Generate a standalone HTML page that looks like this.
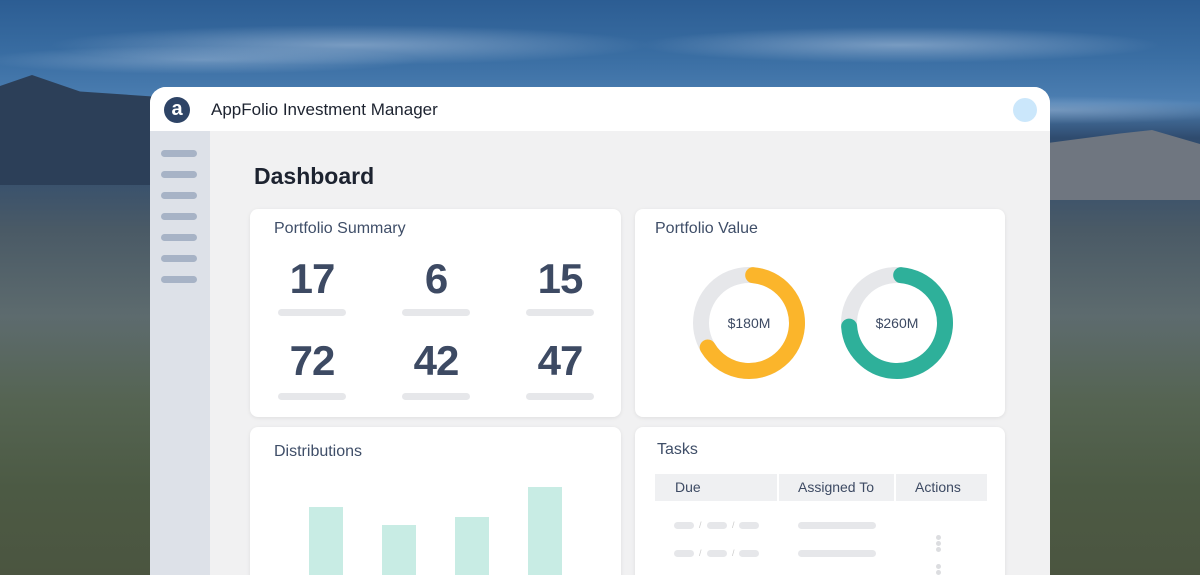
<!DOCTYPE html>
<html><head><meta charset="utf-8"><style>
*{margin:0;padding:0;box-sizing:border-box}
html,body{width:1200px;height:575px;overflow:hidden}
body{position:relative;font-family:"Liberation Sans",sans-serif;
background:linear-gradient(180deg,#2c5d93 0%,#3a6ea3 10%,#4d7fb2 18%,#2f4b6e 24%,#36506e 30%,#4a5a66 40%,#5d6b6e 55%,#556452 70%,#4c5a44 85%,#4b5540 100%);}
.sky{position:absolute;left:0;top:0;width:1200px;height:140px;background:
radial-gradient(ellipse 300px 20px at 350px 45px,rgba(200,215,235,.45),transparent),
radial-gradient(ellipse 260px 18px at 900px 45px,rgba(200,215,235,.45),transparent),
radial-gradient(ellipse 200px 14px at 1050px 110px,rgba(200,215,235,.35),transparent),
radial-gradient(ellipse 220px 14px at 200px 60px,rgba(200,215,235,.35),transparent);}
.mtnL{position:absolute;left:0;top:75px;width:160px;height:110px;background:#2c3f58;clip-path:polygon(0 10%,20% 0,50% 15%,100% 20%,100% 100%,0 100%)}
.mtnR{position:absolute;left:1040px;top:130px;width:160px;height:70px;background:#6f7680;clip-path:polygon(0 20%,50% 5%,70% 0,100% 20%,100% 100%,0 100%)}
.win{position:absolute;left:150px;top:87px;width:900px;height:488px;background:#f1f1f2;border-radius:16px 16px 0 0;overflow:hidden}
.hdr{height:44px;background:#fff;position:relative}
.logo{position:absolute;left:14px;top:10px;width:26px;height:26px;border-radius:50%;background:#2e4466;color:#fff;font-size:20px;font-weight:bold;text-align:center;line-height:24px}
.title{position:absolute;left:61px;top:13px;font-size:17px;color:#1d2330}
.av{position:absolute;left:863px;top:11px;width:24px;height:24px;border-radius:50%;background:#cbe7fb}
.side{position:absolute;left:0;top:44px;width:60px;height:444px;background:#dde1e8}
.side i{position:absolute;left:11px;width:36px;height:7px;border-radius:4px;background:#a7b3c6}
h1{position:absolute;left:104px;top:76px;font-size:23px;color:#1d2330;font-weight:600}
.card{position:absolute;background:#fff;border-radius:8px;box-shadow:0 1px 4px rgba(0,0,0,.08);overflow:hidden}
.ct{position:absolute;left:24px;top:11px;font-size:16px;color:#3f4e68}
.num{position:absolute;width:80px;text-align:center;font-size:42px;color:#3d4a63;font-weight:bold;letter-spacing:-1px}
.bar{position:absolute;width:68px;height:7px;border-radius:4px;background:#e6e7ea}
.cb{position:absolute;background:#c8ece4;width:34px;bottom:0}
.th{position:absolute;top:47px;height:27px;background:#eff0f2;font-size:14px;color:#3d4a63;line-height:27px}
.pl{position:absolute;height:7px;border-radius:4px;background:#e6e7ea}
.sl{position:absolute;font-size:9px;color:#ccc}
.dot{position:absolute;width:5px;height:5px;border-radius:50%;background:#dcdde0}
</style></head><body>
<div class="sky"></div><div class="mtnL"></div><div class="mtnR"></div>
<div class="win">
<div class="hdr"><div class="logo">a</div><div class="title">AppFolio Investment Manager</div><div class="av"></div></div>
<div class="side"><i style="top:19px"></i><i style="top:40px"></i><i style="top:61px"></i><i style="top:82px"></i><i style="top:103px"></i><i style="top:124px"></i><i style="top:145px"></i></div>
<h1>Dashboard</h1>
<div class="card" style="left:100px;top:122px;width:371px;height:208px">
<div class="ct">Portfolio Summary</div>
<div class="num" style="left:22px;top:46px">17</div><div class="num" style="left:146px;top:46px">6</div><div class="num" style="left:270px;top:46px">15</div>
<div class="bar" style="left:28px;top:100px"></div><div class="bar" style="left:152px;top:100px"></div><div class="bar" style="left:276px;top:100px"></div>
<div class="num" style="left:22px;top:128px">72</div><div class="num" style="left:146px;top:128px">42</div><div class="num" style="left:270px;top:128px">47</div>
<div class="bar" style="left:28px;top:184px"></div><div class="bar" style="left:152px;top:184px"></div><div class="bar" style="left:276px;top:184px"></div>
</div>
<div class="card" style="left:485px;top:122px;width:370px;height:208px">
<div class="ct" style="left:20px">Portfolio Value</div>
<svg style="position:absolute;left:0;top:0" width="370" height="208">
<g transform="translate(114,114)"><circle r="48" fill="none" stroke="#e6e7ea" stroke-width="16"/>
<circle r="48" fill="none" stroke="#fbb52b" stroke-width="16" stroke-linecap="round" stroke-dasharray="196 400" transform="rotate(-85)"/>
<text y="5" text-anchor="middle" font-size="14" fill="#3d4a63" font-family="Liberation Sans">$180M</text></g>
<g transform="translate(262,114)"><circle r="48" fill="none" stroke="#e6e7ea" stroke-width="16"/>
<circle r="48" fill="none" stroke="#2eb09a" stroke-width="16" stroke-linecap="round" stroke-dasharray="218 400" transform="rotate(-85)"/>
<text y="5" text-anchor="middle" font-size="14" fill="#3d4a63" font-family="Liberation Sans">$260M</text></g>
</svg>
</div>
<div class="card" style="left:100px;top:340px;width:371px;height:160px">
<div class="ct" style="top:16px">Distributions</div>
<div class="cb" style="left:59px;top:80px"></div>
<div class="cb" style="left:132px;top:98px"></div>
<div class="cb" style="left:205px;top:90px"></div>
<div class="cb" style="left:278px;top:60px"></div>
</div>
<div class="card" style="left:485px;top:340px;width:370px;height:160px">
<div class="ct" style="left:22px;top:14px">Tasks</div>
<div class="th" style="left:20px;width:122px;padding-left:20px">Due</div>
<div class="th" style="left:144px;width:115px;padding-left:19px">Assigned To</div>
<div class="th" style="left:261px;width:91px;padding-left:19px">Actions</div>
<div class="pl" style="left:39px;top:95px;width:20px"></div><div class="sl" style="left:64px;top:93px">/</div><div class="pl" style="left:72px;top:95px;width:20px"></div><div class="sl" style="left:97px;top:93px">/</div><div class="pl" style="left:104px;top:95px;width:20px"></div>
<div class="pl" style="left:163px;top:95px;width:78px"></div>
<div class="pl" style="left:39px;top:123px;width:20px"></div><div class="sl" style="left:64px;top:121px">/</div><div class="pl" style="left:72px;top:123px;width:20px"></div><div class="sl" style="left:97px;top:121px">/</div><div class="pl" style="left:104px;top:123px;width:20px"></div>
<div class="pl" style="left:163px;top:123px;width:78px"></div>
<div class="dot" style="left:301px;top:108px"></div><div class="dot" style="left:301px;top:114px"></div><div class="dot" style="left:301px;top:120px"></div>
<div class="dot" style="left:301px;top:137px"></div><div class="dot" style="left:301px;top:143px"></div>
</div>
</div>
</body></html>
